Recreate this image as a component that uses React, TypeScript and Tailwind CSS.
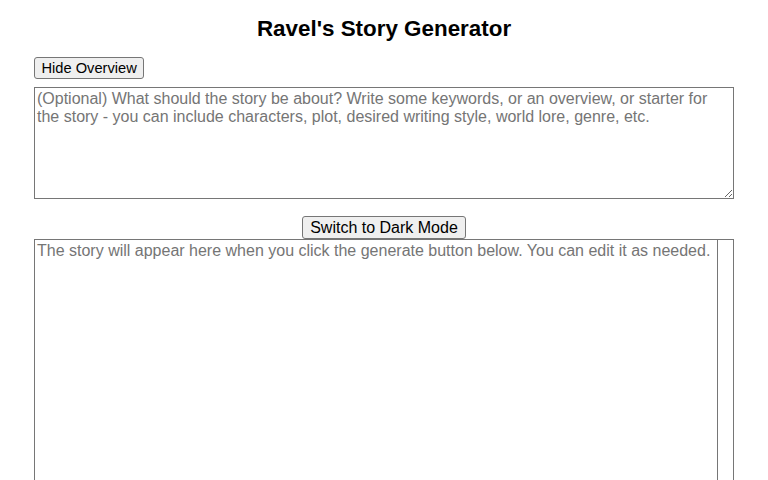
import React, { useState } from 'react';

export default function App() {
  const [showOverview, setShowOverview] = useState(true);
  const [overview, setOverview] = useState('');
  const [story, setStory] = useState('');

  return (
    <div className="min-h-screen bg-white text-black font-['Liberation_Sans',Arial,sans-serif]">
      <div className="mx-auto w-[700px] pt-[15px]">
        <h1 className="text-center text-[22.4px] font-bold leading-[28px]">Ravel's Story Generator</h1>

        {/* Overview */}
        <button
          onClick={() => setShowOverview(!showOverview)}
          className="mt-[14px] block h-[22px] rounded-[3px] border border-[#767676] bg-[#efefef] px-[6.5px] text-[14.67px] leading-[16px] text-black"
        >
          {showOverview ? 'Hide Overview' : 'Show Overview'}
        </button>
        {showOverview && (
          <textarea
            value={overview}
            onChange={(e) => setOverview(e.target.value)}
            placeholder="(Optional) What should the story be about? Write some keywords, or an overview, or starter for the story - you can include characters, plot, desired writing style, world lore, genre, etc."
            className="mt-[8px] block h-[112px] w-full resize border border-[#767676] px-[2px] py-[2px] text-[16px] leading-[18px] outline-none placeholder:text-[#757575]"
          />
        )}

        <div className="mt-[17px] flex justify-center">
          <button className="block h-[23px] rounded-[3px] border border-[#767676] bg-[#efefef] px-[7px] text-[16px] leading-[18px] text-black">
            Switch to Dark Mode
          </button>
        </div>

        {/* Story */}
        <div className="flex h-[300px] border border-[#767676]">
          <textarea
            value={story}
            onChange={(e) => setStory(e.target.value)}
            placeholder="The story will appear here when you click the generate button below. You can edit it as needed."
            className="block h-full flex-1 resize-none border-r border-[#767676] px-[2px] py-[2px] text-[16px] leading-[18px] outline-none placeholder:text-[#757575]"
          />
          <div className="w-[15px]" />
        </div>
      </div>
    </div>
  );
}
